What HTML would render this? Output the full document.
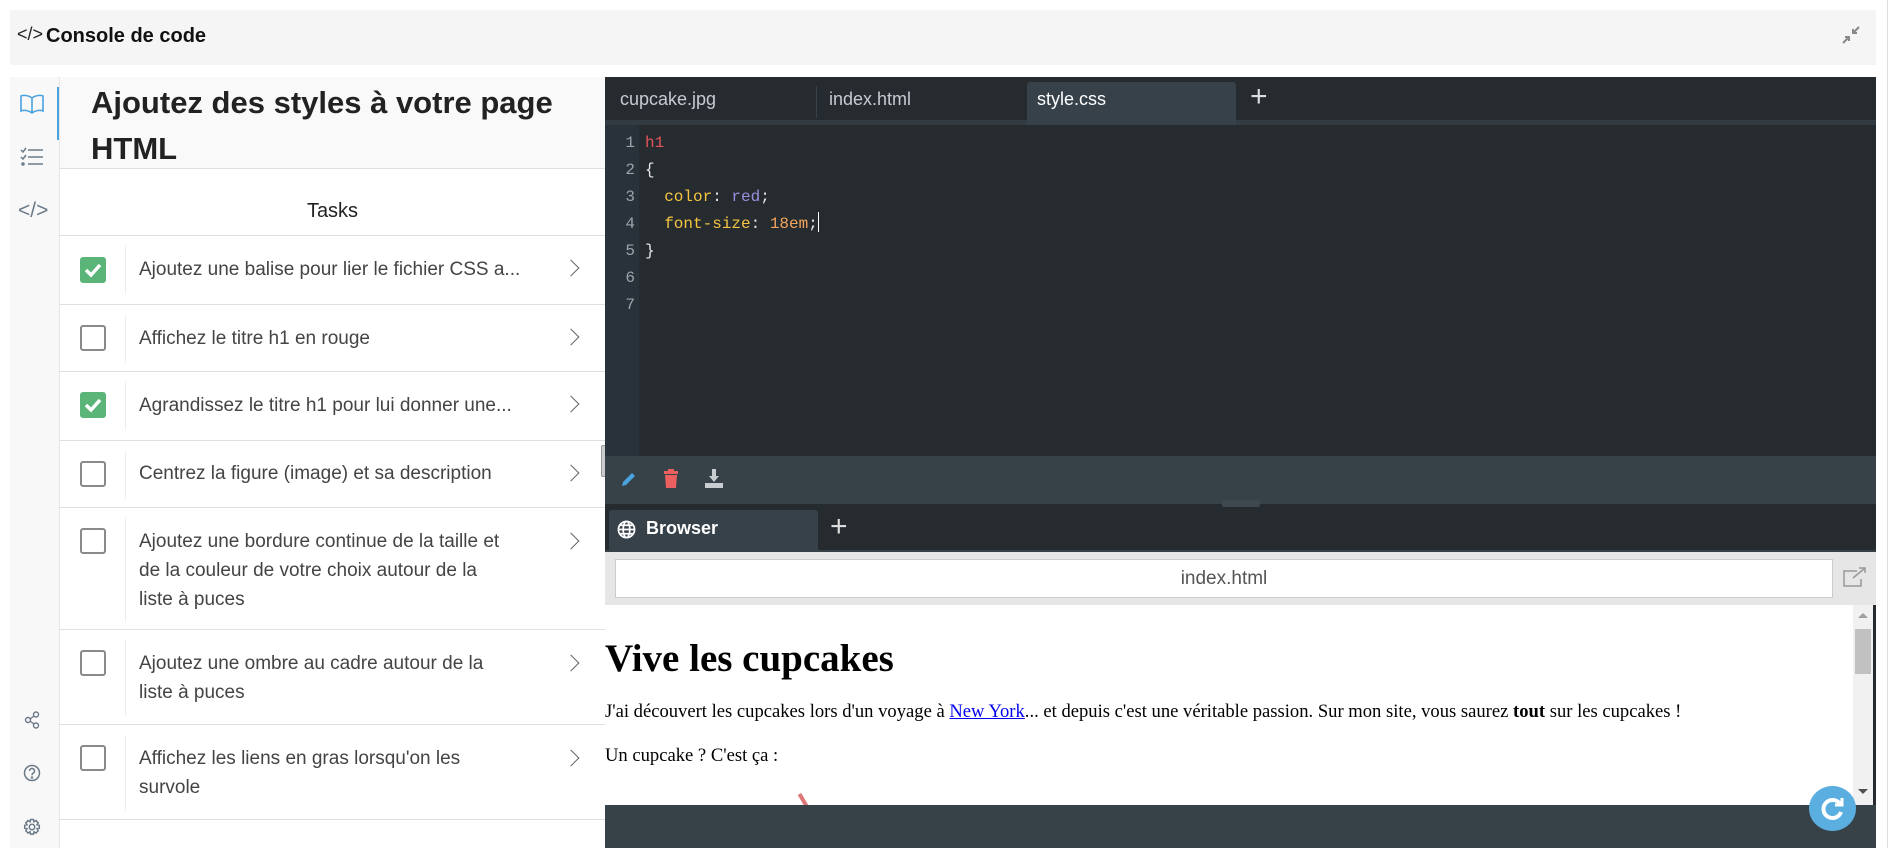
<!DOCTYPE html>
<html><head><meta charset="utf-8"><style>
*{margin:0;padding:0;box-sizing:border-box}
body{width:1890px;height:848px;overflow:hidden;background:#fff;font-family:"Liberation Sans",sans-serif;position:relative}
.a{position:absolute}
.hdr{left:10px;top:10px;width:1866px;height:55px;background:#f5f5f5}
.side{left:10px;top:77px;width:50px;height:771px;background:#f8f8f8;border-right:1px solid #e6e6e6}
.panel{left:60px;top:77px;width:545px;height:771px;background:#fff}
.row{position:absolute;left:60px;width:545px;border-top:1px solid #e0e0e0}
.cb{position:absolute;left:20px;width:26px;height:26px;border:2px solid #8a8a8a;border-radius:3px}
.cb.on{background:#5bb578;border-color:#5bb578}
.dv{position:absolute;left:65px;width:1px;background:#eee}
.tx{position:absolute;left:79px;width:370px;font-size:19px;line-height:29px;color:#444}
.one{width:420px;white-space:nowrap}
.chev{position:absolute;left:505px;width:12px;height:12px;border-top:1.5px solid #666;border-right:1.5px solid #666;transform:rotate(45deg)}
.code{font-family:"Liberation Mono",monospace;font-size:16px;line-height:27px}
</style></head><body>
<div class="a hdr"></div>
<div class="a" style="left:17px;top:24px;font-size:18px;color:#222">&lt;/&gt;</div>
<div class="a" style="left:46px;top:25px;font-size:20px;font-weight:bold;color:#111">Console de code</div>
<svg class="a" style="left:1842px;top:26px" width="18" height="18" viewBox="0 0 18 18" fill="none" stroke="#888" stroke-width="2"><path d="M1 17L7 11M3 11h4v4M17 1l-6 6M11 3v4h4"/></svg>
<div class="a" style="left:1887px;top:0;width:1px;height:848px;background:#ddd"></div>

<div class="a side"></div>
<div class="a" style="left:57px;top:87px;width:2px;height:53px;background:#4aa3df"></div>
<svg class="a" style="left:19px;top:94px" width="26" height="20" viewBox="0 0 26 20" fill="none" stroke="#4aa3df" stroke-width="1.6"><path d="M13 4C9 1 4 1 2 2v15c2-1 7-1 11 2 4-3 9-3 11-2V2c-2-1-7-1-11 2zM13 4v15"/></svg>
<svg class="a" style="left:20px;top:147px" width="24" height="20" viewBox="0 0 24 20" fill="none" stroke="#6b7a88" stroke-width="1.5"><path d="M8 3h15M8 10h15M8 17h15M1 3l2 2 3-4M1 10l2 2 3-4"/><circle cx="3" cy="17" r="1"/></svg>
<div class="a" style="left:18px;top:199px;font-size:21px;color:#6b7a88">&lt;/&gt;</div>
<svg class="a" style="left:24px;top:711px" width="16" height="18" viewBox="0 0 16 18" fill="none" stroke="#6b7a88" stroke-width="1.4"><circle cx="4" cy="9" r="2.5"/><circle cx="12" cy="3.5" r="2.5"/><circle cx="12" cy="14.5" r="2.5"/><path d="M6 8l4-3M6 10l4 3"/></svg>
<svg class="a" style="left:23px;top:764px" width="18" height="18" viewBox="0 0 18 18" fill="none" stroke="#6b7a88" stroke-width="1.5"><circle cx="9" cy="9" r="7.5"/><path d="M6.5 7a2.5 2.5 0 1 1 3.5 2.3c-.8.4-1 1-1 2"/><circle cx="9" cy="13.5" r=".5"/></svg>
<svg class="a" style="left:23px;top:818px" width="18" height="18" viewBox="0 0 18 18" fill="none" stroke="#6b7a88" stroke-width="1.5"><circle cx="9" cy="9" r="2.7"/><path d="M7.5 1.5h3l.5 2.3 2-1.2 2.2 2.2-1.2 2 2.3.5v3l-2.3.5 1.2 2-2.2 2.2-2-1.2-.5 2.3h-3l-.5-2.3-2 1.2-2.2-2.2 1.2-2-2.3-.5v-3l2.3-.5-1.2-2 2.2-2.2 2 1.2z"/></svg>

<div class="a panel"></div>
<div class="a" style="left:60px;top:77px;width:545px;height:92px;background:#f9f9f9;border-bottom:1px solid #e0e0e0"></div>
<div class="a" style="left:91px;top:80px;font-size:31px;font-weight:bold;color:#222;line-height:46px;width:500px">Ajoutez des styles à votre page HTML</div>
<div class="a" style="left:60px;top:200px;width:545px;text-align:center;font-size:20px;color:#222">Tasks</div>

<div class="row" style="top:235px;height:69px"><div class="cb on" style="top:21px"><svg width="22" height="22" viewBox="0 0 22 22"><path d="M4 11l5 5 9-10" stroke="#fff" stroke-width="3.5" fill="none"/></svg></div><div class="dv" style="top:10px;height:48px"></div><div class="tx one" style="top:19px">Ajoutez une balise pour lier le fichier CSS a...</div><div class="chev" style="top:26px"></div></div>
<div class="row" style="top:304px;height:67px"><div class="cb" style="top:20px"></div><div class="dv" style="top:10px;height:48px"></div><div class="tx one" style="top:19px">Affichez le titre h1 en rouge</div><div class="chev" style="top:26px"></div></div>
<div class="row" style="top:371px;height:69px"><div class="cb on" style="top:20px"><svg width="22" height="22" viewBox="0 0 22 22"><path d="M4 11l5 5 9-10" stroke="#fff" stroke-width="3.5" fill="none"/></svg></div><div class="dv" style="top:10px;height:48px"></div><div class="tx one" style="top:19px">Agrandissez le titre h1 pour lui donner une...</div><div class="chev" style="top:26px"></div></div>
<div class="row" style="top:440px;height:67px"><div class="cb" style="top:20px"></div><div class="dv" style="top:10px;height:48px"></div><div class="tx one" style="top:18px">Centrez la figure (image) et sa description</div><div class="chev" style="top:26px"></div></div>
<div class="row" style="top:507px;height:122px"><div class="cb" style="top:20px"></div><div class="dv" style="top:10px;height:104px"></div><div class="tx" style="top:19px">Ajoutez une bordure continue de la taille et de la couleur de votre choix autour de la liste à puces</div><div class="chev" style="top:27px"></div></div>
<div class="row" style="top:629px;height:95px"><div class="cb" style="top:20px"></div><div class="dv" style="top:10px;height:76px"></div><div class="tx" style="top:19px">Ajoutez une ombre au cadre autour de la liste à puces</div><div class="chev" style="top:27px"></div></div>
<div class="row" style="top:724px;height:96px;border-bottom:1px solid #e0e0e0"><div class="cb" style="top:20px"></div><div class="dv" style="top:10px;height:76px"></div><div class="tx" style="top:19px">Affichez les liens en gras lorsqu'on les survole</div><div class="chev" style="top:27px"></div></div>
<div class="a" style="left:601px;top:445px;width:5px;height:32px;background:#ccc;border-radius:2px;border:1px solid #999"></div>

<!-- editor -->
<div class="a" style="left:605px;top:77px;width:1271px;height:771px;background:#252b2f"></div>
<div class="a" style="left:605px;top:120px;width:1271px;height:5px;background:#323b42"></div>
<div class="a" style="left:1027px;top:82px;width:209px;height:43px;background:#37414a;border-radius:3px 3px 0 0"></div>
<div class="a" style="left:816px;top:86px;width:1px;height:32px;background:#37414a"></div>
<div class="a" style="left:620px;top:89px;font-size:18px;color:#c5cbd0">cupcake.jpg</div>
<div class="a" style="left:829px;top:89px;font-size:18px;color:#c5cbd0">index.html</div>
<div class="a" style="left:1037px;top:89px;font-size:18px;color:#fff">style.css</div>
<div class="a" style="left:1250px;top:80px;font-size:30px;color:#ddd;font-weight:300">+</div>
<div class="a" style="left:605px;top:125px;width:34px;height:331px;background:#29323a"></div>
<div class="a code" style="left:613px;top:130px;width:22px;text-align:right;color:#9aa3ab">1<br>2<br>3<br>4<br>5<br>6<br>7</div>
<div class="a code" style="left:645px;top:130px;color:#e8e8e8;white-space:pre"><span style="color:#e0545a">h1</span>
{
  <span style="color:#f5c542">color</span>: <span style="color:#9b8fe0">red</span>;
  <span style="color:#f5c542">font-size</span>: <span style="color:#f4a55a">18em</span>;<span style="display:inline-block;width:1px;height:20px;background:#fff;vertical-align:-4px"></span>
}</div>
<div class="a" style="left:605px;top:456px;width:1271px;height:48px;background:#374148"></div>
<svg class="a" style="left:620px;top:470px" width="18" height="18" viewBox="0 0 18 18"><path d="M2 16l1-4 9-9 3 3-9 9z" fill="#4aa3df"/></svg>
<svg class="a" style="left:663px;top:469px" width="16" height="19" viewBox="0 0 16 19" fill="#e9605f"><rect x="1" y="2" width="14" height="3"/><rect x="5" y="0" width="6" height="3"/><path d="M2 6h12l-1 13H3z"/></svg>
<svg class="a" style="left:705px;top:469px" width="18" height="19" viewBox="0 0 18 19" fill="#c8cdd1"><path d="M7 0h4v7h3l-5 6-5-6h3z"/><rect x="0" y="14" width="18" height="5"/></svg>
<div class="a" style="left:1222px;top:500px;width:38px;height:7px;background:#3e4850;border-radius:2px"></div>
<div class="a" style="left:609px;top:510px;width:209px;height:40px;background:#37414a;border-radius:3px 3px 0 0"></div>
<svg class="a" style="left:617px;top:520px" width="19" height="19" viewBox="0 0 20 20" fill="none" stroke="#fff" stroke-width="1.8"><circle cx="10" cy="10" r="8.5"/><ellipse cx="10" cy="10" rx="3.5" ry="8.5"/><path d="M1.5 10h17M3 5.5h14M3 14.5h14"/></svg>
<div class="a" style="left:646px;top:518px;font-size:18px;font-weight:bold;color:#fff">Browser</div>
<div class="a" style="left:830px;top:510px;font-size:30px;color:#ddd">+</div>
<div class="a" style="left:605px;top:550px;width:1271px;height:55px;background:#e6e6e6;border-top:2px solid #374148"></div>
<div class="a" style="left:615px;top:559px;width:1218px;height:39px;background:#fff;border:1px solid #ccc;text-align:center;font-size:19px;line-height:37px;color:#555">index.html</div>
<svg class="a" style="left:1843px;top:567px" width="24" height="20" viewBox="0 0 24 20" fill="none" stroke="#999" stroke-width="1.5"><path d="M14 4H1v15h17v-7M10 11L22 1M16 1h6v5"/></svg>
<div class="a" style="left:605px;top:605px;width:1248px;height:200px;background:#fff;overflow:hidden;font-family:'Liberation Serif',serif;color:#000">
<div class="a" style="left:0;top:31px;font-size:39px;font-weight:bold">Vive les cupcakes</div>
<div class="a" style="left:0;top:96px;font-size:18.6px;white-space:nowrap">J'ai découvert les cupcakes lors d'un voyage à <span style="color:#00e;text-decoration:underline">New York</span>... et depuis c'est une véritable passion. Sur mon site, vous saurez <b>tout</b> sur les cupcakes !</div>
<div class="a" style="left:0;top:140px;font-size:18.6px">Un cupcake ? C'est ça :</div>
<div class="a" style="left:196px;top:188px;width:4px;height:14px;background:#d77;transform:rotate(-30deg)"></div>
</div>
<div class="a" style="left:1853px;top:605px;width:20px;height:200px;background:#f1f1f1"></div>
<div class="a" style="left:1855px;top:629px;width:16px;height:45px;background:#c1c1c1"></div>
<div class="a" style="left:1858px;top:613px;width:0;height:0;border:5px solid transparent;border-bottom-color:#a0a0a0;border-top:0"></div>
<div class="a" style="left:1858px;top:789px;width:0;height:0;border:5px solid transparent;border-top-color:#505050;border-bottom:0"></div>
<div class="a" style="left:605px;top:805px;width:1271px;height:43px;background:#374148"></div>
<div class="a" style="left:1809px;top:786px;width:47px;height:45px;border-radius:50%;background:#5aaee0"></div>
<svg class="a" style="left:1820px;top:796px" width="26" height="26" viewBox="0 0 26 26" fill="none" stroke="#fff" stroke-width="4"><path d="M20 8A9 9 0 1 0 21 16"/><path d="M15 9h7V2" stroke-width="3"/></svg>
</body></html>
